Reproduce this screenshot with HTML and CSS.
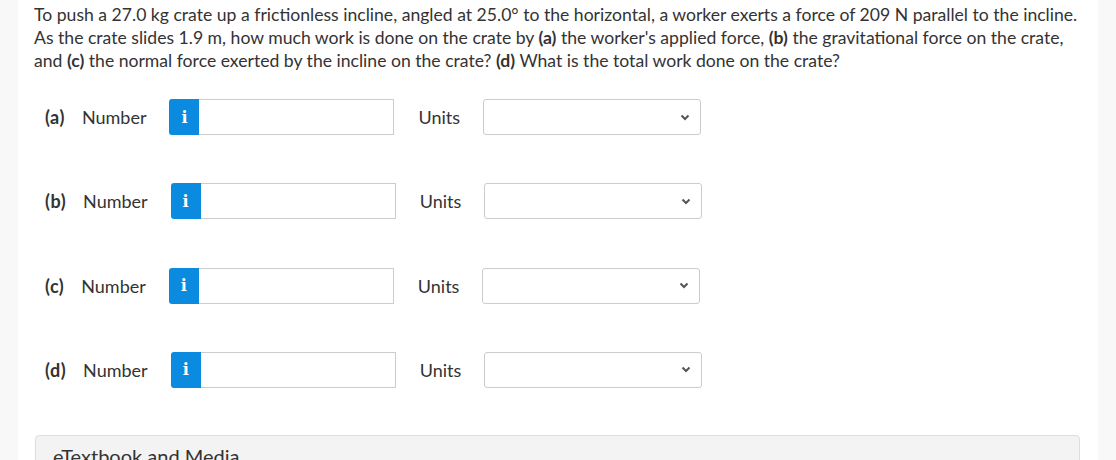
FILE: index.html
```html
<!DOCTYPE html>
<html>
<head>
<meta charset="utf-8">
<link rel="stylesheet" href="styles.css">
</head>
<body>
<div class="page">
  <main class="content">
    <p class="question">To push a 27.0 kg crate up a frictionless incline, angled at 25.0° to the horizontal, a worker exerts a force of 209 N parallel to the incline. As the crate slides 1.9 m, how much work is done on the crate by <b>(a)</b> the worker's applied force, <b>(b)</b> the gravitational force on the crate, and <b>(c)</b> the normal force exerted by the incline on the crate? <b>(d)</b> What is the total work done on the crate?</p>

    <div class="answers">
      <div class="row">
        <span class="part">(a)</span>
        <span class="lbl">Number</span>
        <span class="numgroup"><span class="info">i</span><span class="num"></span></span>
        <span class="units">Units</span>
        <span class="select"><svg class="chev" width="10" height="7" viewBox="0 0 10 7"><path d="M1.5 1.5 L5 5 L8.5 1.5" fill="none" stroke="#555" stroke-width="2"/></svg></span>
      </div>
      <div class="row">
        <span class="part">(b)</span>
        <span class="lbl">Number</span>
        <span class="numgroup"><span class="info">i</span><span class="num"></span></span>
        <span class="units">Units</span>
        <span class="select"><svg class="chev" width="10" height="7" viewBox="0 0 10 7"><path d="M1.5 1.5 L5 5 L8.5 1.5" fill="none" stroke="#555" stroke-width="2"/></svg></span>
      </div>
      <div class="row">
        <span class="part">(c)</span>
        <span class="lbl">Number</span>
        <span class="numgroup"><span class="info">i</span><span class="num"></span></span>
        <span class="units">Units</span>
        <span class="select"><svg class="chev" width="10" height="7" viewBox="0 0 10 7"><path d="M1.5 1.5 L5 5 L8.5 1.5" fill="none" stroke="#555" stroke-width="2"/></svg></span>
      </div>
      <div class="row">
        <span class="part">(d)</span>
        <span class="lbl">Number</span>
        <span class="numgroup"><span class="info">i</span><span class="num"></span></span>
        <span class="units">Units</span>
        <span class="select"><svg class="chev" width="10" height="7" viewBox="0 0 10 7"><path d="M1.5 1.5 L5 5 L8.5 1.5" fill="none" stroke="#555" stroke-width="2"/></svg></span>
      </div>
    </div>

    <div class="media">
      <div class="media-title">eTextbook and Media</div>
    </div>
  </main>
</div>
</body>
</html>
```

FILE: styles.css
```css
html, body {
  margin: 0;
  padding: 0;
  background: #f8f8f8;
  height: 460px;
  overflow: hidden;
}
body {
  font-family: Lato, "Liberation Sans", sans-serif;
  color: #333;
  font-size: 18px;
}
.page {
  display: flex;
  padding: 0 18px;
}
.content {
  flex: 1;
  background: #fff;
  padding: 3px 16px 40px 16px;
  min-height: 460px;
  box-sizing: border-box;
}
.question {
  margin: 0;
  line-height: 23px;
  font-size: 17.6px;
}
.question b {
  font-weight: 700;
}
.answers {
  padding-top: 27px;
  padding-left: 11px;
}
.row {
  display: flex;
  align-items: center;
  height: 36px;
  margin-bottom: 48.3px;
}
.row:last-child {
  margin-bottom: 47.5px;
}
.part {
  font-weight: 700;
  margin-right: 17px;
  letter-spacing: 0.5px;
}
.lbl {
  margin-right: 23px;
}
.numgroup {
  display: flex;
  height: 36px;
}
.info {
  width: 30px;
  height: 36px;
  background: #0a8be0;
  border-radius: 3px 0 0 3px;
  color: #fff;
  font-family: "DejaVu Serif", serif;
  font-weight: 700;
  font-size: 16px;
  display: flex;
  align-items: center;
  justify-content: center;
}
.num {
  width: 194px;
  height: 34px;
  border: 1px solid #ccc;
  border-left: none;
  background: #fff;
  display: block;
}
.units {
  margin-left: 24px;
  margin-right: 23px;
}
.select {
  height: 34px;
  border: 1px solid #ccc;
  border-radius: 3px;
  display: flex;
  align-items: center;
  justify-content: flex-end;
  padding-right: 10px;
  box-sizing: content-box;
  width: 206px;
}
.chev {
  display: block;
}
.media {
  margin-left: 1px;
  margin-right: 2px;
  background: #f3f3f3;
  border: 1px solid #ddd;
  border-radius: 4px 4px 0 0;
  height: 80px;
  padding: 8px 17px;
}
.media-title {
  font-size: 20px;
  color: #333;
}
```
